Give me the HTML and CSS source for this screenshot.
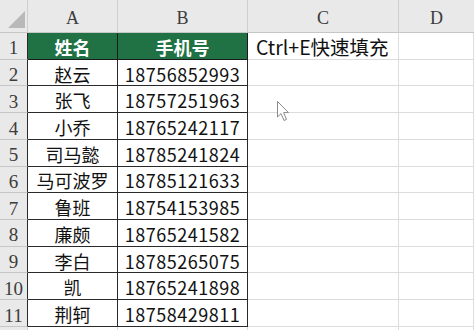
FILE: index.html
```html
<!DOCTYPE html>
<html lang="zh-CN">
<head>
    <meta charset="UTF-8">
    <title>Ctrl+E快速填充</title>
    <link rel="stylesheet" href="styles.css">
</head>
<body>
    <div class="sheet">
        <div class="corner"><span class="tri"></span></div>
        <div class="colhead">A</div>
        <div class="colhead">B</div>
        <div class="colhead">C</div>
        <div class="colhead last">D</div>

        <div class="rowhead in">1</div>
        <div class="cell head">姓名</div>
        <div class="cell head">手机号</div>
        <div class="cell free note">Ctrl+E快速填充</div>
        <div class="cell free"></div>

        <div class="rowhead in">2</div>
        <div class="cell data">赵云</div>
        <div class="cell data num">18756852993</div>
        <div class="cell free"></div>
        <div class="cell free"></div>

        <div class="rowhead in">3</div>
        <div class="cell data">张飞</div>
        <div class="cell data num">18757251963</div>
        <div class="cell free"></div>
        <div class="cell free"></div>

        <div class="rowhead in">4</div>
        <div class="cell data">小乔</div>
        <div class="cell data num">18765242117</div>
        <div class="cell free"></div>
        <div class="cell free"></div>

        <div class="rowhead in">5</div>
        <div class="cell data">司马懿</div>
        <div class="cell data num">18785241824</div>
        <div class="cell free"></div>
        <div class="cell free"></div>

        <div class="rowhead in">6</div>
        <div class="cell data">马可波罗</div>
        <div class="cell data num">18785121633</div>
        <div class="cell free"></div>
        <div class="cell free"></div>

        <div class="rowhead in">7</div>
        <div class="cell data">鲁班</div>
        <div class="cell data num">18754153985</div>
        <div class="cell free"></div>
        <div class="cell free"></div>

        <div class="rowhead in">8</div>
        <div class="cell data">廉颇</div>
        <div class="cell data num">18765241582</div>
        <div class="cell free"></div>
        <div class="cell free"></div>

        <div class="rowhead in">9</div>
        <div class="cell data">李白</div>
        <div class="cell data num">18785265075</div>
        <div class="cell free"></div>
        <div class="cell free"></div>

        <div class="rowhead in">10</div>
        <div class="cell data">凯</div>
        <div class="cell data num">18765241898</div>
        <div class="cell free"></div>
        <div class="cell free"></div>

        <div class="rowhead in">11</div>
        <div class="cell data">荆轲</div>
        <div class="cell data num">18758429811</div>
        <div class="cell free"></div>
        <div class="cell free"></div>

        <div class="rowhead"></div>
        <div class="cell free"></div>
        <div class="cell free"></div>
        <div class="cell free"></div>
        <div class="cell free"></div>
    </div>

    <svg class="pointer" width="14" height="22" viewBox="0 0 14 22">
        <path d="M1.5 1.5 L1.5 17 L5 13.6 L8 20.5 L10.5 19.4 L7.6 12.6 L12.5 12.6 Z" fill="#fff" stroke="#8a8a8a" stroke-width="1"/>
    </svg>
</body>
</html>
```

FILE: styles.css
```css
body {
    margin: 0;
    background-color: #fff;
    font-family: "Noto Sans CJK SC", "Noto Sans", sans-serif;
    overflow: hidden;
}

.sheet {
    display: grid;
    grid-template-columns: 28px 90px 130px 151px 1fr;
    grid-template-rows: 33px repeat(11, 26.73px) 1fr;
    width: 474px;
    height: 330px;
}

.corner,
.colhead,
.rowhead {
    background-color: #e9e9e9;
    border-right: 1px solid #cfcfcf;
    border-bottom: 1px solid #c6c6c6;
    color: #3c3c3c;
    font-family: "Liberation Serif", serif;
    font-size: 18px;
    display: flex;
    align-items: center;
    justify-content: center;
}

.corner {
    position: relative;
}

.tri {
    width: 0;
    height: 0;
    border-left: 17px solid transparent;
    border-bottom: 17px solid #b9b9b9;
    position: absolute;
    right: 2px;
    bottom: 4px;
}

.colhead {
    padding-top: 4px;
}

.colhead.last {
    border-right: none;
}

.rowhead {
    padding-top: 5px;
    font-size: 19px;
}

.rowhead.in {
    border-right-color: #2a2a2a;
}

.cell {
    border-right: 1px solid #dcdcdc;
    border-bottom: 1px solid #dcdcdc;
    display: flex;
    align-items: center;
    justify-content: center;
    font-size: 18px;
    color: #111;
    white-space: nowrap;
    padding-top: 2px;
}

.head {
    background-color: #207245;
    color: #fff;
    font-weight: 700;
    border-right-color: #1b1b1b;
    border-bottom-color: #1b1b1b;
}

.data {
    border-right-color: #2a2a2a;
    border-bottom-color: #2a2a2a;
}

.num {
    letter-spacing: 0.5px;
}

.note {
    justify-content: flex-start;
    padding-left: 8px;
    font-size: 19.5px;
}

.pointer {
    position: absolute;
    left: 276px;
    top: 100px;
}
```
